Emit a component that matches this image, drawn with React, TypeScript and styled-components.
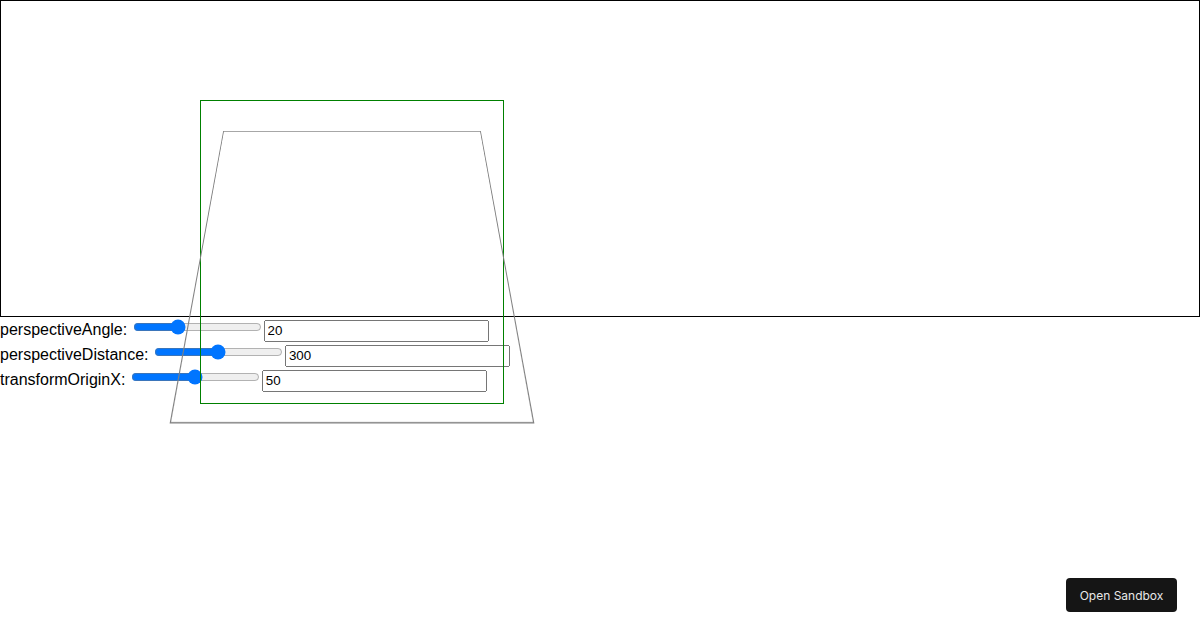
import { useState } from 'react';
import styled, { createGlobalStyle } from 'styled-components';

const GlobalStyle = createGlobalStyle`
  html, body, #root {
    min-height: 100%;
    height: 100%;
  }
  body {
    margin: 0;
    font-family: 'Liberation Sans', Arial, sans-serif;
    font-size: 16px;
    background: #fff;
  }
`;

const controls = [
  { name: 'perspectiveAngle', min: 0, max: 60 },
  { name: 'perspectiveDistance', min: 0, max: 600 },
  { name: 'transformOriginX', min: 0, max: 100 },
];

export default function App() {
  const [values, setValues] = useState<Record<string, number>>({
    perspectiveAngle: 20,
    perspectiveDistance: 300,
    transformOriginX: 50,
  });

  const setValue = (name: string, value: string) => {
    setValues({ ...values, [name]: Number(value) });
  };

  return (
    <>
      <GlobalStyle />
      <Stage>
        <Outline>
          <Plane
            style={{
              transform: `perspective(${values.perspectiveDistance}px) rotateX(${values.perspectiveAngle}deg)`,
              transformOrigin: `${values.transformOriginX}% 50%`,
            }}
          />
        </Outline>
      </Stage>
      {controls.map((control) => (
        <Row key={control.name}>
          <Label>{control.name}:</Label>
          <Slider
            type="range"
            min={control.min}
            max={control.max}
            value={values[control.name]}
            onChange={(e) => setValue(control.name, e.target.value)}
          />
          <NumberInput
            type="text"
            value={values[control.name]}
            onChange={(e) => setValue(control.name, e.target.value)}
          />
        </Row>
      ))}
      <SandboxButton>Open Sandbox</SandboxButton>
    </>
  );
}

const Stage = styled.div`
  position: relative;
  box-sizing: border-box;
  width: 100%;
  height: 317px;
  border: 1px solid #000;
`;
const Outline = styled.div`
  position: absolute;
  left: 199px;
  top: 99px;
  width: 302px;
  height: 302px;
  border: 1px solid green;
  z-index: 1;
`;
const Plane = styled.div`
  box-sizing: border-box;
  width: 302px;
  height: 302px;
  border: 1px solid gray;
  will-change: transform;
`;
const Row = styled.div`
  height: 25px;
  line-height: 25px;
  white-space: nowrap;
`;
const Label = styled.span`
  margin-right: 3.4px;
`;
const Slider = styled.input`
  vertical-align: baseline;
`;
const NumberInput = styled.input`
  box-sizing: border-box;
  width: 225px;
  height: 22px;
  font-family: 'Liberation Sans', Arial, sans-serif;
  font-size: 13.33px;
`;
const SandboxButton = styled.button`
  position: fixed;
  right: 23px;
  bottom: 18px;
  width: 111px;
  height: 34px;
  border: none;
  border-radius: 4px;
  background: #151515;
  color: #e8e8e8;
  font-family: Inter, sans-serif;
  font-size: 12px;
  cursor: pointer;
`;
